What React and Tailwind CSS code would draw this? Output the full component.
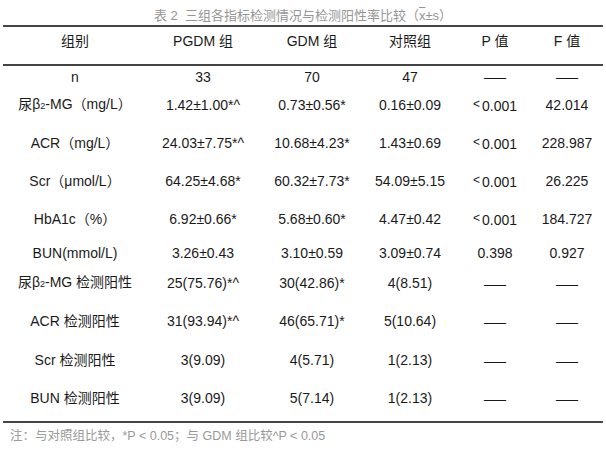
import React from "react";

const DASH = <span className="font-['Noto_Sans_CJK_SC',sans-serif]">——</span>;
const LT = (v) => (
  <span>
    <span className="text-[12px] align-[3px] mr-[2px]">&lt;</span>
    {v}
  </span>
);
const B2 = (
  <>
    尿β<span className="text-[9px]">2</span>-MG
  </>
);

const rows = [
  { h: "h-[20px]", c: ["n", "33", "70", "47", DASH, DASH] },
  { h: "h-[38px]", c: [<>{B2}（mg/L）</>, "1.42±1.00*^", "0.73±0.56*", "0.16±0.09", LT("0.001"), "42.014"] },
  { h: "h-[38px]", c: ["ACR（mg/L）", "24.03±7.75*^", "10.68±4.23*", "1.43±0.69", LT("0.001"), "228.987"] },
  { h: "h-[38px]", c: ["Scr（μmol/L）", "64.25±4.68*", "60.32±7.73*", "54.09±5.15", LT("0.001"), "26.225"] },
  { h: "h-[38px]", c: ["HbA1c（%）", "6.92±0.66*", "5.68±0.60*", "4.47±0.42", LT("0.001"), "184.727"] },
  { h: "h-[30px]", c: ["BUN(mmol/L)", "3.26±0.43", "3.10±0.59", "3.09±0.74", "0.398", "0.927"] },
  { h: "h-[30px]", c: [<>{B2} 检测阳性</>, "25(75.76)*^", "30(42.86)*", "4(8.51)", DASH, DASH] },
  { h: "h-[46px]", c: ["ACR 检测阳性", "31(93.94)*^", "46(65.71)*", "5(10.64)", DASH, DASH] },
  { h: "h-[32px]", c: ["Scr 检测阳性", "3(9.09)", "4(5.71)", "1(2.13)", DASH, DASH] },
  { h: "h-[44px]", c: ["BUN 检测阳性", "3(9.09)", "5(7.14)", "1(2.13)", DASH, DASH] },
];

const cols = "grid grid-cols-[144px_112px_106px_90px_80px_64px]";

export default function App() {
  return (
    <div className="w-[606px] h-[451px] bg-white text-[#1a1a1a] font-['Liberation_Sans','Noto_Sans_CJK_SC',sans-serif] overflow-hidden">
      <div className="h-[25px] pt-[7px] text-center text-[13px] leading-[17px] text-[#959595]">
        表 2&nbsp; 三组各指标检测情况与检测阳性率比较（<span className="overline">x</span>±s）
      </div>
      <div className="mx-[3px] h-[2px] bg-[#444]" />
      <div className={`${cols} ml-[3px] h-[37px] pt-[4px] text-[14px] leading-[20px] text-center`}>
        <div>组别</div>
        <div>PGDM 组</div>
        <div>GDM 组</div>
        <div>对照组</div>
        <div>P 值</div>
        <div>F 值</div>
      </div>
      <div className="mx-[3px] h-[2px] bg-[#444]" />
      {rows.map((r, i) => (
        <div key={i} className={`${cols} ml-[3px] ${r.h} items-center text-[14px] leading-[20px] text-center`}>
          {r.c.map((c, j) => (
            <div key={j} className="whitespace-nowrap">{c}</div>
          ))}
        </div>
      ))}
      <div className="mx-[3px] mt-[1px] h-[2px] bg-[#444]" />
      <div className="pl-[10px] mt-[5px] text-[12.5px] leading-[16px] text-[#999]">
        注：与对照组比较，*P &lt; 0.05；与 GDM 组比较^P &lt; 0.05
      </div>
    </div>
  );
}
